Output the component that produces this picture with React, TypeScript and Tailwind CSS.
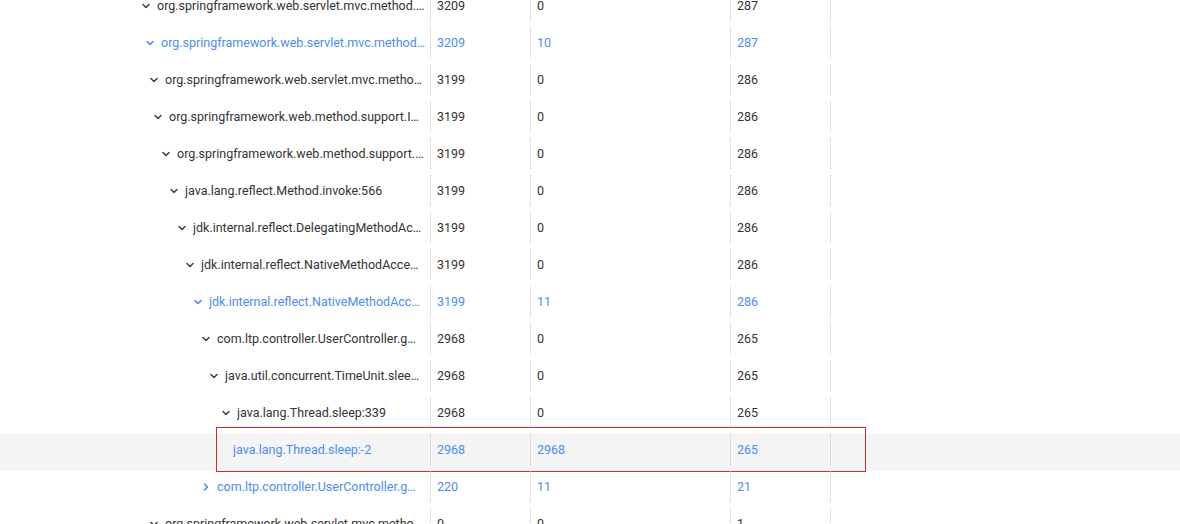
import { ReactNode } from 'react'

type Row = {
  name: string
  x: number
  total: number
  self: number
  count: number
  hot?: boolean
  chevron?: 'down' | 'right'
  selected?: boolean
}

const rows: Row[] = [
  { name: 'org.springframework.web.servlet.mvc.method.…', x: 157, total: 3209, self: 0, count: 287, chevron: 'down' },
  { name: 'org.springframework.web.servlet.mvc.method…', x: 161, total: 3209, self: 10, count: 287, chevron: 'down', hot: true },
  { name: 'org.springframework.web.servlet.mvc.metho…', x: 165, total: 3199, self: 0, count: 286, chevron: 'down' },
  { name: 'org.springframework.web.method.support.I…', x: 169, total: 3199, self: 0, count: 286, chevron: 'down' },
  { name: 'org.springframework.web.method.support.…', x: 177, total: 3199, self: 0, count: 286, chevron: 'down' },
  { name: 'java.lang.reflect.Method.invoke:566', x: 185, total: 3199, self: 0, count: 286, chevron: 'down' },
  { name: 'jdk.internal.reflect.DelegatingMethodAc…', x: 193, total: 3199, self: 0, count: 286, chevron: 'down' },
  { name: 'jdk.internal.reflect.NativeMethodAcce…', x: 201, total: 3199, self: 0, count: 286, chevron: 'down' },
  { name: 'jdk.internal.reflect.NativeMethodAcc…', x: 209, total: 3199, self: 11, count: 286, chevron: 'down', hot: true },
  { name: 'com.ltp.controller.UserController.g…', x: 217, total: 2968, self: 0, count: 265, chevron: 'down' },
  { name: 'java.util.concurrent.TimeUnit.slee…', x: 225, total: 2968, self: 0, count: 265, chevron: 'down' },
  { name: 'java.lang.Thread.sleep:339', x: 237, total: 2968, self: 0, count: 265, chevron: 'down' },
  { name: 'java.lang.Thread.sleep:-2', x: 233, total: 2968, self: 2968, count: 265, hot: true, selected: true },
  { name: 'com.ltp.controller.UserController.g…', x: 217, total: 220, self: 11, count: 21, chevron: 'right', hot: true },
  { name: 'org.springframework.web.servlet.mvc.metho…', x: 165, total: 0, self: 0, count: 1, chevron: 'down' },
]

function Chevron({ dir }: { dir: 'down' | 'right' }) {
  return (
    <svg width="10" height="10" viewBox="0 0 10 10" className="shrink-0">
      <path
        d={dir === 'down' ? 'M2 3.5 5 6.5 8 3.5' : 'M3.5 2 6.5 5 3.5 8'}
        fill="none"
        stroke="currentColor"
        strokeWidth="1.6"
        strokeLinecap="round"
        strokeLinejoin="round"
      />
    </svg>
  )
}

function Cell({ width, children }: { width: string; children?: ReactNode }) {
  return (
    <div className={`${width} h-full flex items-start shrink-0`}>
      <div className="h-[31px] border-l border-dotted border-[#c4c4c4]" />
      <div className="pl-[6px] pt-[6px] leading-5">{children}</div>
    </div>
  )
}

export default function App() {
  return (
    <div
      className="w-[1180px] h-[524px] overflow-hidden bg-white text-[12.5px]"
      style={{ fontFamily: 'Roboto, "Noto Sans", sans-serif' }}
    >
      <div className="-mt-[10px]">
        {rows.map((r, i) => (
          <div
            key={i}
            className={`relative flex h-[37px] ${r.selected ? 'bg-[#f5f5f5]' : ''} ${
              r.hot ? 'text-[#4b8cf6]' : 'text-[#333]'
            }`}
          >
            <div className="w-[430px] shrink-0 flex items-start pt-[6px] leading-5">
              <div style={{ width: r.x - 16 }} className="shrink-0" />
              <div className={`w-[16px] h-5 flex items-center ${r.hot ? 'text-[#4b8cf6]' : 'text-[#444]'}`}>
                {r.chevron && <Chevron dir={r.chevron} />}
              </div>
              <span className="truncate pr-[4px]">{r.name}</span>
            </div>
            <Cell width="w-[100px]">{r.total}</Cell>
            <Cell width="w-[200px]">{r.self}</Cell>
            <Cell width="w-[100px]">{r.count}</Cell>
            <Cell width="w-[100px]" />
            {r.selected && (
              <div className="absolute left-[216px] top-[-7px] w-[650px] h-[45px] border border-[#d9272e]" />
            )}
          </div>
        ))}
      </div>
    </div>
  )
}
